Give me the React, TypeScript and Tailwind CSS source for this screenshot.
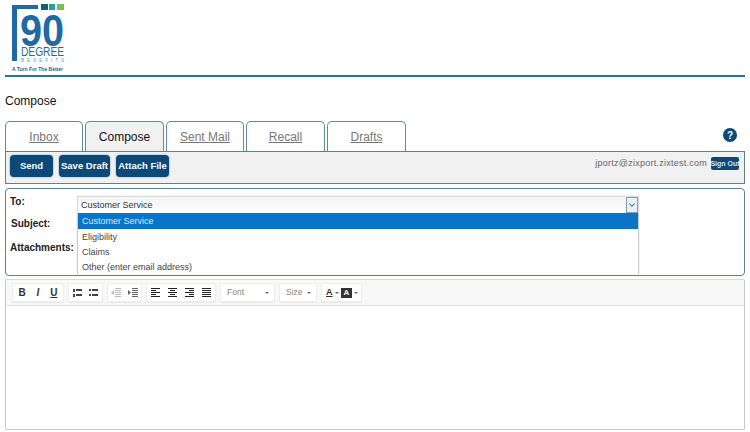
import React from 'react';
import { ChevronDown } from 'lucide-react';

const tabs = [
  { label: 'Inbox', width: 'w-[78px]' },
  { label: 'Compose', width: 'w-[79px]', active: true },
  { label: 'Sent Mail', width: 'w-[78px]' },
  { label: 'Recall', width: 'w-[79px]' },
  { label: 'Drafts', width: 'w-[79px]' },
];

const options = ['Customer Service', 'Eligibility', 'Claims', 'Other (enter email address)'];

const Logo = () => (
  <svg width="60" height="70" viewBox="0 0 60 70" className="ml-[11px] block">
    <path d="M1 1h26v4H6v52H1z" fill="#1f6aa5" />
    <rect x="30" y="0" width="7" height="6" fill="#1d5b70" />
    <rect x="38" y="0" width="6" height="6" fill="#1fa59a" />
    <rect x="46" y="0" width="7" height="6" fill="#7dbf4c" />
    <text x="9" y="42" fontFamily="Liberation Sans" fontWeight="700" fontSize="45" fill="#1f6aa5" textLength="44" lengthAdjust="spacingAndGlyphs">90</text>
    <text x="10" y="52" fontFamily="Liberation Sans" fontSize="12" fill="#1f6aa5" textLength="43" lengthAdjust="spacingAndGlyphs">DEGREE</text>
    <text x="10" y="58" fontFamily="Liberation Sans" fontSize="4.5" fill="#3fa7b5" textLength="43">BENEFITS</text>
    <text x="1" y="67" fontFamily="Liberation Sans" fontWeight="700" fontSize="5" fill="#1f5f8f" textLength="51" lengthAdjust="spacingAndGlyphs">A Turn For The Better</text>
  </svg>
);

const ActionButton = ({ label, width }: { label: string; width: string }) => (
  <button className={`${width} h-[22px] bg-[#0b4a78] rounded-[4px] text-white text-[9.5px] font-bold whitespace-nowrap shadow-[0_0_2px_#6b8ca3] flex items-center justify-center`}>
    {label}
  </button>
);

const Lines = ({ rows }: { rows: [number, number][] }) => (
  <svg width="9" height="9" viewBox="0 0 9 9">
    {rows.map(([x, w], i) => (
      <rect key={i} x={x} y={i * 2} width={w} height="1" fill="#222" />
    ))}
  </svg>
);

const ToolGroup = ({ children, className = '' }: { children: React.ReactNode; className?: string }) => (
  <div className={`h-[19px] flex items-center bg-white rounded-[2px] border border-[#eeeeee] shadow-[0_1px_1px_#e8e8e8] ${className}`}>
    {children}
  </div>
);

const ToolCombo = ({ label, width }: { label: string; width: string }) => (
  <ToolGroup className={`${width} justify-between pl-[6px] pr-[5px]`}>
    <span className="text-[8.5px] text-[#888]">{label}</span>
    <span className="w-0 h-0 border-x-[2px] border-x-transparent border-t-[2px] border-t-[#666]" />
  </ToolGroup>
);

const ListIcon = ({ ordered }: { ordered?: boolean }) => (
  <svg width="9" height="9" viewBox="0 0 9 9" fill="#444">
    <rect x="0" y="1" width="2" height={ordered ? 3 : 2} />
    <rect x="0" y="6" width="2" height={ordered ? 3 : 2} />
    <rect x="3" y="1" width="6" height="2" />
    <rect x="3" y="6" width="6" height="2" />
  </svg>
);

const IndentIcon = ({ dark, flip }: { dark?: boolean; flip?: boolean }) => (
  <svg width="10" height="9" viewBox="0 0 10 9" fill={dark ? '#666' : '#bbb'}>
    <rect x="4" y="0" width="6" height="1" />
    <rect x="4" y="2" width="6" height="1" />
    <rect x="4" y="4" width="6" height="1" />
    <rect x="4" y="6" width="6" height="1" />
    <rect x="4" y="8" width="6" height="1" />
    <path d={flip ? 'M0 2l3 2.5L0 7z' : 'M3 2L0 4.5 3 7z'} />
  </svg>
);

export default function App() {
  return (
    <div className="w-[750px] h-[432px] overflow-hidden bg-white font-['Liberation_Sans',Arial,sans-serif] pt-[4px]">
      <Logo />
      <div className="mx-[5px] mt-[1px] h-[2px] bg-[#2a6f9e]" />
      <h1 className="ml-[5px] mt-[17px] text-[12px] leading-[14px] text-[#111]">Compose</h1>

      {/* tabs */}
      <div className="relative mt-[13px] h-[30px] mx-[5px] flex gap-[2px] items-end">
        {tabs.map(tab => (
          <div
            key={tab.label}
            className={`${tab.width} h-[30px] rounded-t-[5px] border border-b-0 border-[#5f8c9c] flex items-center justify-center text-[12px] ${
              tab.active ? 'bg-[#f1f1f1] text-[#111]' : 'bg-white text-[#777] underline'
            }`}
          >
            {tab.label}
          </div>
        ))}
        <div className="absolute right-[8px] top-[7px] w-[14px] h-[14px] rounded-full bg-[#0b4a78] text-white text-[10px] font-bold flex items-center justify-center">
          ?
        </div>
      </div>

      {/* action bar */}
      <div className="mx-[5px] h-[33px] bg-[#f1f1f1] border border-[#5f8090] flex items-start pl-[4px] pr-[5px] pt-[3px]">
        <div className="flex gap-[6px]">
          <ActionButton label="Send" width="w-[43px]" />
          <ActionButton label="Save Draft" width="w-[51px]" />
          <ActionButton label="Attach File" width="w-[53px]" />
        </div>
        <div className="ml-auto flex items-center gap-[4px] mt-[2px]">
          <span className="text-[9px] text-[#666] tracking-[0.25px]">jportz@zixport.zixtest.com</span>
          <button className="w-[28px] h-[13px] rounded-[2px] bg-[#0b4a78] text-[#cfe6f5] text-[7px] font-bold whitespace-nowrap flex items-center justify-center">
            Sign Out
          </button>
        </div>
      </div>

      {/* address form */}
      <div className="relative mx-[5px] mt-[4px] h-[88px] rounded-[4px] border border-[#5f8090] text-[10px] font-bold text-[#222]">
        <div className="absolute left-[4px] top-[7px] leading-[12px]">To:</div>
        <div className="absolute left-[5px] top-[29px] leading-[12px]">Subject:</div>
        <div className="absolute left-[4px] top-[53px] leading-[12px]">Attachments:</div>
        <div className="absolute left-[71px] top-[7px] w-[562px] font-normal shadow-[0_0_1px_#bbb]">
          <div className="h-[17px] flex items-center justify-between pl-[3px] bg-gradient-to-b from-[#f4f4f4] to-white border border-[#ddd] border-b-0 text-[9px] text-[#333]">
            <span className="pt-[1px]">Customer Service</span>
            <span className="w-[12px] h-[16px] border border-[#7f9db9] bg-[#e8f1fa] flex items-center justify-center">
              <ChevronDown size={10} strokeWidth={2.5} className="text-[#4d6185]" />
            </span>
          </div>
          <div className="bg-white border-l border-r border-[#ccc] text-[9px] text-[#444]">
            {options.map((option, i) => (
              <div
                key={option}
                className={`${i === 0 ? 'h-[16px] pt-[1px] bg-[#0a74c9] text-[#d5ecff]' : 'h-[15px] pt-[2px]'} flex items-center pl-[4px]`}
              >
                {option}
              </div>
            ))}
          </div>
        </div>
      </div>

      {/* editor */}
      <div className="mx-[5px] mt-[3px] h-[151px] rounded-[2px] border border-[#c8c8c8] border-t-[#d8d8d8] bg-white">
        <div className="h-[26px] bg-[#f8f8f8] border-b border-[#e2e2e2] flex items-center gap-[4px] pl-[6px]">
          <ToolGroup className="w-[52px] justify-around text-[10px] text-[#333]">
            <b>B</b>
            <i className="font-bold">I</i>
            <span className="underline font-bold">U</span>
          </ToolGroup>
          <ToolGroup className="w-[35px] justify-around">
            <ListIcon ordered />
            <ListIcon />
          </ToolGroup>
          <ToolGroup className="w-[35px] justify-around">
            <IndentIcon />
            <IndentIcon dark flip />
          </ToolGroup>
          <ToolGroup className="w-[70px] justify-around">
            <Lines rows={[[0, 9], [0, 5], [0, 9], [0, 5], [0, 9]]} />
            <Lines rows={[[0, 9], [2, 5], [0, 9], [2, 5], [0, 9]]} />
            <Lines rows={[[0, 9], [4, 5], [0, 9], [4, 5], [0, 9]]} />
            <Lines rows={[[0, 9], [0, 9], [0, 9], [0, 9], [0, 9]]} />
          </ToolGroup>
          <ToolCombo label="Font" width="w-[55px]" />
          <ToolCombo label="Size" width="w-[38px]" />
          <ToolGroup className="w-[41px] justify-around pl-[3px] pr-[2px]">
            <span className="text-[9px] font-bold text-[#333] underline">A</span>
            <span className="w-0 h-0 border-x-[2px] border-x-transparent border-t-[2px] border-t-[#666]" />
            <span className="w-[11px] h-[10px] bg-[#333] text-white text-[8px] font-bold leading-[10px] text-center">A</span>
            <span className="w-0 h-0 border-x-[2px] border-x-transparent border-t-[2px] border-t-[#666]" />
          </ToolGroup>
        </div>
      </div>
    </div>
  );
}
